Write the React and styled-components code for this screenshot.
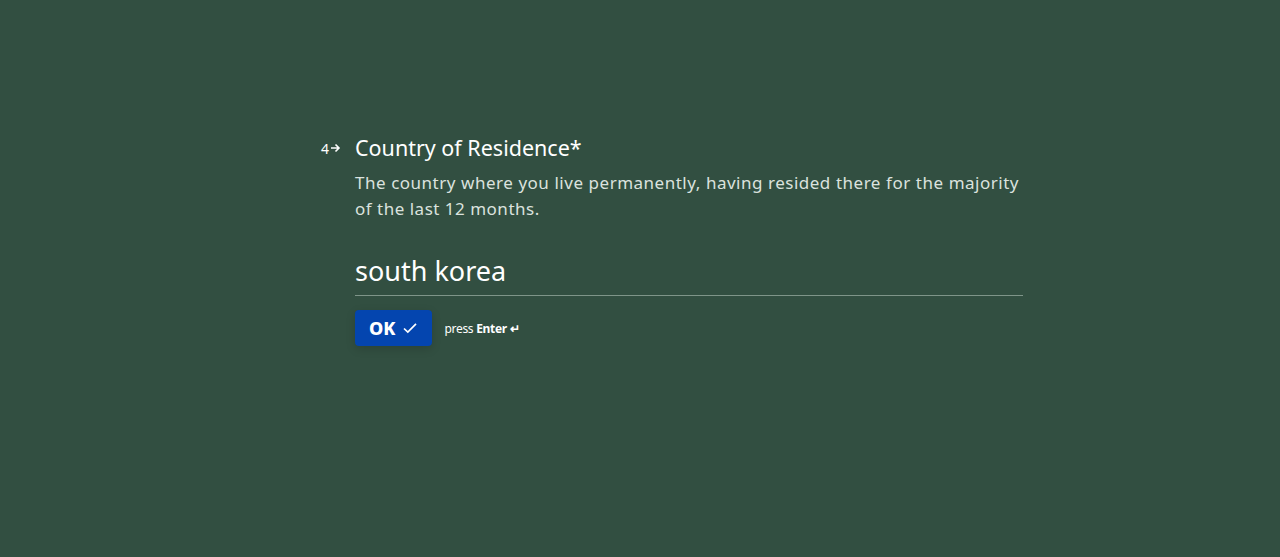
import React, { useState } from 'react'
import styled, { createGlobalStyle } from 'styled-components'

const GlobalStyle = createGlobalStyle`
  html, body {
    margin: 0;
    padding: 0;
    background: #324f41;
  }
  body {
    font-family: "Noto Sans", "Open Sans", sans-serif;
  }
`

const Page = styled.div`
  height: 557px;
  display: flex;
  justify-content: center;
  padding-top: 134px;
  box-sizing: border-box;
`

const Question = styled.div`
  display: flex;
  width: 701px;
  margin-left: 61px;
`

const Counter = styled.div`
  width: 34px;
  flex-shrink: 0;
  display: flex;
  align-items: center;
  height: 28px;
  color: #fff;
  font-size: 14px;
  gap: 1px;
  padding-left: 1px;
`

const Body = styled.div`
  flex: 1;
  min-width: 0;
`

const Title = styled.h1`
  margin: 0;
  font-size: 21.5px;
  font-weight: 400;
  line-height: 28px;
  color: #fff;
`

const Description = styled.p`
  margin: 8px 0 0;
  font-size: 17px;
  line-height: 26px;
  letter-spacing: 0.5px;
  color: #dbe2de;
  text-align: justify;
  width: 664px;
`

const Field = styled.input`
  display: block;
  margin-top: 30px;
  width: 668px;
  box-sizing: border-box;
  background: transparent;
  border: none;
  border-bottom: 1px solid #7f9589;
  color: #fff;
  font-family: inherit;
  font-size: 27px;
  line-height: 38px;
  padding: 0 0 5px;
  outline: none;
`

const Actions = styled.div`
  display: flex;
  align-items: center;
  gap: 12px;
  margin-top: 14px;
`

const OkButton = styled.button`
  display: flex;
  align-items: center;
  gap: 7px;
  height: 36px;
  padding: 0 14px;
  background: #0445af;
  border: none;
  border-radius: 4px;
  color: #fff;
  font-family: inherit;
  font-size: 18px;
  font-weight: 800;
  box-shadow: 0 3px 10px rgba(0, 0, 0, 0.15);
  cursor: pointer;
`

const Hint = styled.span`
  color: #fff;
  font-size: 12px;
  letter-spacing: -0.3px;
  b {
    font-weight: 700;
  }
`

const App = () => {
  const [value, setValue] = useState('south korea')

  return (
    <Page>
      <GlobalStyle />
      <Question>
        <Counter>
          4
          <svg width="11" height="10" viewBox="0 0 11 10">
            <path d="M1 5h8M5.5 1.5L9 5 5.5 8.5" stroke="#fff" strokeWidth="1.6" fill="none" />
          </svg>
        </Counter>
        <Body>
          <Title>Country of Residence*</Title>
          <Description>
            The country where you live permanently, having resided there for the majority of the last 12 months.
          </Description>
          <Field value={value} onChange={(e) => setValue(e.target.value)} />
          <Actions>
            <OkButton>
              OK
              <svg width="16" height="16" viewBox="0 0 16 16">
                <path d="M2 8.5l3.8 3.6L14 3.8" stroke="#fff" strokeWidth="1.7" fill="none" />
              </svg>
            </OkButton>
            <Hint>press <b>Enter ↵</b></Hint>
          </Actions>
        </Body>
      </Question>
    </Page>
  )
}

export default App
